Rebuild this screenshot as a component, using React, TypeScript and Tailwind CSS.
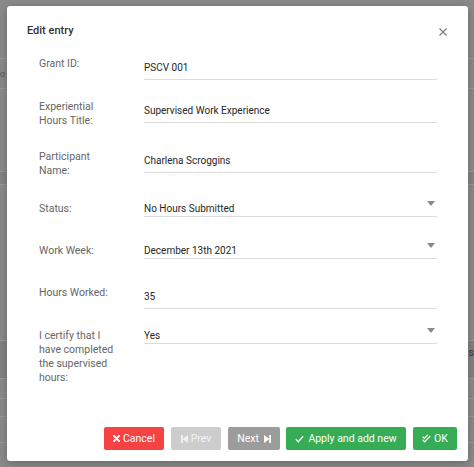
import React from "react";

const font = { fontFamily: "Roboto, 'Noto Sans', Arial, sans-serif" };

function Arrow() {
  return (
    <svg className="absolute right-[2px] top-[-1px]" width="8" height="5" viewBox="0 0 8 5">
      <path d="M0 0 L8 0 L4 5 Z" fill="#8a8a8a" />
    </svg>
  );
}

function TextRow({ label, value, h }: { label: React.ReactNode; value: string; h: string }) {
  return (
    <div className={`flex items-start pl-[32px] ${h}`}>
      <div className="w-[105px] text-[10.5px] leading-[14px] text-[#666]">{label}</div>
      <div className="w-[293px] pt-[4px] pb-[4px] border-b border-[#dcdcdc] text-[10px] leading-[14px] text-[#262626]">
        {value}
      </div>
    </div>
  );
}

function SelectRow({ label, value, h }: { label: React.ReactNode; value: string; h: string }) {
  return (
    <div className={`flex items-start pl-[32px] ${h}`}>
      <div className="w-[105px] text-[10.5px] leading-[14px] text-[#666]">{label}</div>
      <div className="relative w-[293px] border-b border-[#dcdcdc] text-[10px] leading-[14px] text-[#262626]">
        {value}
        <Arrow />
      </div>
    </div>
  );
}

export default function App() {
  return (
    <div className="relative w-[474px] h-[467px] overflow-hidden bg-[#8a8a8a]" style={font}>
      {/* background page under overlay */}
      <div className="flex flex-col">
        <div className="h-[59px] border-b border-[#999]" />
        <div className="h-[30px] border-b border-[#999] text-[9px] leading-[30px] text-[#555]">o</div>
        <div className="h-[83px] border-b border-[#999]" />
        <div className="h-[13px] border-b border-[#999] bg-[#838383]" />
        <div className="h-[156px] border-b border-[#999]" />
        <div className="h-[38px] border-b border-[#999] bg-[#828282] text-[10px] leading-[24px] text-[#333] text-right pr-0">s</div>
        <div className="h-[20px] border-b border-[#999]" />
        <div className="h-[18px] border-b border-[#999]" />
        <div className="h-[26px] border-b border-[#999]" />
      </div>

      {/* modal */}
      <div className="absolute left-[7px] top-[6px] w-[461px] h-[455px] bg-white rounded-[3px] shadow-[0_2px_8px_rgba(0,0,0,0.25)] flex flex-col">
        <div className="relative h-[51px] pl-[20px] pt-[18px]">
          <div className="text-[11px] leading-[14px] font-medium text-[#333]">Edit entry</div>
          <svg className="absolute left-[432px] top-[22px]" width="8" height="8" viewBox="0 0 8 8">
            <path d="M0.5 0.5 L7.5 7.5 M7.5 0.5 L0.5 7.5" stroke="#777" strokeWidth="1.1" />
          </svg>
        </div>

        <TextRow label="Grant ID:" value="PSCV 001" h="h-[43px]" />
        <TextRow
          label={<>Experiential<br />Hours Title:</>}
          value="Supervised Work Experience"
          h="h-[50px]"
        />
        <TextRow
          label={<>Participant<br />Name:</>}
          value="Charlena Scroggins"
          h="h-[52px]"
        />
        <SelectRow label="Status:" value="No Hours Submitted" h="h-[42px]" />
        <SelectRow label="Work Week:" value="December 13th 2021" h="h-[42px]" />
        <TextRow label="Hours Worked:" value="35" h="h-[43px]" />
        <SelectRow
          label={<>I certify that I<br />have completed<br />the supervised<br />hours:</>}
          value="Yes"
          h="h-[56px]"
        />

        <div className="mt-auto flex justify-end pr-[11px] pb-[11px] text-[10.5px] text-white">
          <button className="w-[60px] h-[23px] rounded-[2px] bg-[#f54242] flex items-center justify-center gap-[3px]">
            <svg width="7" height="7" viewBox="0 0 7 7">
              <path d="M1 1 L6 6 M6 1 L1 6" stroke="white" strokeWidth="1.9" strokeLinecap="round" />
            </svg>
            <span>Cancel</span>
          </button>
          <button className="ml-[7px] w-[50px] h-[23px] rounded-[2px] bg-[#cdcdcd] text-[#f2f2f2] flex items-center justify-center gap-[3px]">
            <svg width="7" height="8" viewBox="0 0 7 8">
              <rect x="0" y="0" width="1.8" height="8" fill="#f2f2f2" />
              <path d="M7 0 L7 8 L1.5 4 Z" fill="#f2f2f2" />
            </svg>
            <span>Prev</span>
          </button>
          <button className="ml-[7px] w-[52px] h-[23px] rounded-[2px] bg-[#9c9c9c] flex items-center justify-center gap-[5px]">
            <span>Next</span>
            <svg width="7" height="8" viewBox="0 0 7 8">
              <path d="M0 0 L0 8 L5.5 4 Z" fill="white" />
              <rect x="5.2" y="0" width="1.8" height="8" fill="white" />
            </svg>
          </button>
          <button className="ml-[6px] w-[120px] h-[23px] rounded-[2px] bg-[#36ad55] flex items-center justify-center gap-[4px]">
            <svg width="9" height="8" viewBox="0 0 9 8">
              <path d="M0.8 4.2 L3.3 6.7 L8.2 1.2" stroke="white" strokeWidth="1.3" fill="none" />
            </svg>
            <span>Apply and add new</span>
          </button>
          <button className="ml-[7px] w-[44px] h-[23px] rounded-[2px] bg-[#36ad55] flex items-center justify-center gap-[3px]">
            <svg width="9" height="9" viewBox="0 0 9 9">
              <path d="M0.6 2.6 L2.4 4.4 L5.8 0.8" stroke="white" strokeWidth="1.2" fill="none" />
              <path d="M0.6 5.6 L2.6 7.8 L8.4 1.8" stroke="white" strokeWidth="1.2" fill="none" />
            </svg>
            <span>OK</span>
          </button>
        </div>
      </div>
    </div>
  );
}
